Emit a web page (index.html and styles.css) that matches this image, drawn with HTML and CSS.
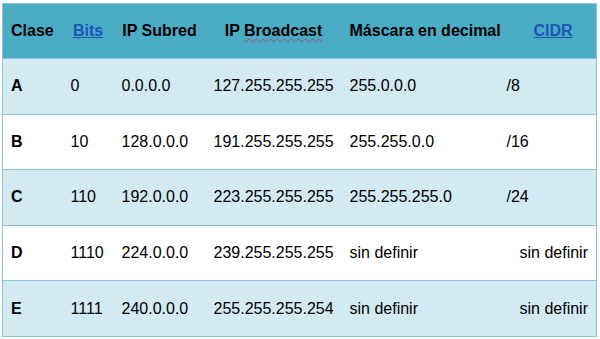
FILE: index.html
```html
<!DOCTYPE html>
<html lang="es">
<head>
<meta charset="utf-8">
<title>Clases de IP</title>
<link rel="stylesheet" href="styles.css">
</head>
<body>
<table class="ip-table">
  <colgroup>
    <col class="c1"><col class="c2"><col class="c3"><col class="c4"><col class="c5"><col class="c6">
  </colgroup>
  <thead>
    <tr class="head">
      <th class="left">Clase</th>
      <th><a href="#" class="link">Bits</a></th>
      <th>IP Subred</th>
      <th>IP <span class="spell">Broadcast</span></th>
      <th class="left">Máscara en decimal</th>
      <th class="cidr"><a href="#" class="link">CIDR</a></th>
    </tr>
  </thead>
  <tbody>
    <tr class="shade">
      <td class="cls">A</td><td>0</td><td>0.0.0.0</td><td>127.255.255.255</td><td>255.0.0.0</td><td>/8</td>
    </tr>
    <tr class="plain">
      <td class="cls">B</td><td>10</td><td>128.0.0.0</td><td>191.255.255.255</td><td>255.255.0.0</td><td>/16</td>
    </tr>
    <tr class="shade">
      <td class="cls">C</td><td>110</td><td>192.0.0.0</td><td>223.255.255.255</td><td>255.255.255.0</td><td>/24</td>
    </tr>
    <tr class="plain">
      <td class="cls">D</td><td>1110</td><td>224.0.0.0</td><td>239.255.255.255</td><td>sin definir</td><td class="right">sin definir</td>
    </tr>
    <tr class="shade">
      <td class="cls">E</td><td>1111</td><td>240.0.0.0</td><td>255.255.255.254</td><td>sin definir</td><td class="right">sin definir</td>
    </tr>
  </tbody>
</table>
</body>
</html>
```
FILE: styles.css
```css
html, body {
  margin: 0;
  padding: 0;
  background: #ffffff;
}

body {
  padding: 3px 0 0 2px;
  font-family: "Liberation Sans", Arial, sans-serif;
  font-size: 16px;
  color: #000;
}

.ip-table {
  border-collapse: collapse;
  table-layout: fixed;
  width: 594px;
  border: 1px solid #8cc3d8;
}

.c1 { width: 60px; }
.c2 { width: 51px; }
.c3 { width: 92px; }
.c4 { width: 136px; }
.c5 { width: 157px; }
.c6 { width: 98px; }

.ip-table th,
.ip-table td {
  padding: 0 8px;
  vertical-align: middle;
  white-space: nowrap;
  text-align: left;
}

.ip-table th {
  font-weight: bold;
  text-align: center;
  height: 54px;
}

.ip-table th.left { text-align: left; }

.ip-table th.cidr {
  text-align: left;
  padding-left: 35px;
}

.ip-table td {
  height: 54.6px;
  border-top: 1px solid #8cc3d8;
}

.ip-table td.right { text-align: right; }

.ip-table td.cls { font-weight: bold; }

.head { background: #4bacc6; }
.shade { background: #d2eaf1; }
.plain { background: #ffffff; }

.link {
  color: #1a56b6;
  text-decoration: underline;
}

.spell {
  text-decoration-line: underline;
  text-decoration-style: wavy;
  text-decoration-color: #9a4a78;
  text-decoration-thickness: 1px;
  text-underline-offset: 2px;
}
```
